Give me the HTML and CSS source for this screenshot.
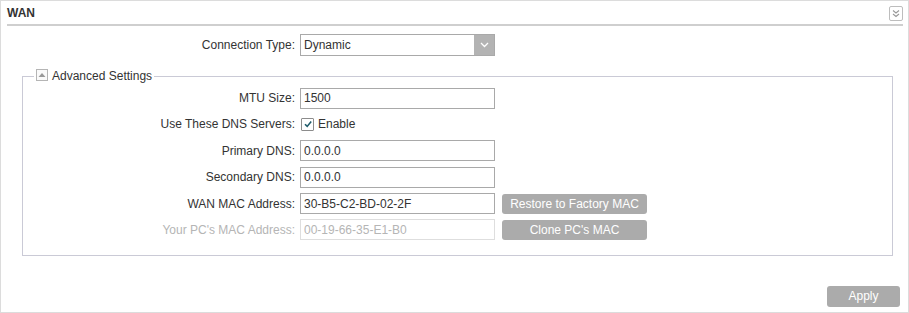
FILE: index.html
```html
<!DOCTYPE html>
<html>
<head>
<meta charset="utf-8">
<link rel="stylesheet" href="styles.css">
</head>
<body>
<div class="panel">
  <div class="header">
    <span class="title">WAN</span>
    <span class="collapse">
      <svg width="8" height="9" viewBox="0 0 8 9"><path d="M1 1.5 L4 4 L7 1.5 M1 5 L4 7.5 L7 5" fill="none" stroke="#999" stroke-width="1.1"/></svg>
    </span>
  </div>

  <div class="row top-row">
    <label class="lbl">Connection Type:</label>
    <div class="select">
      <span class="sel-text">Dynamic</span>
      <span class="sel-arrow"><svg width="9" height="6" viewBox="0 0 9 6"><path d="M1 1 L4.5 4.5 L8 1" fill="none" stroke="#fff" stroke-width="1.3"/></svg></span>
    </div>
  </div>

  <fieldset class="adv">
    <legend><span class="up-icon"><svg width="8" height="6" viewBox="0 0 8 6"><path d="M0.5 5 L4 1 L7.5 5 Z" fill="#999"/></svg></span>Advanced Settings</legend>
    <div class="grid">
      <label class="lbl">MTU Size:</label>
      <div class="field"><input class="txt" value="1500"></div>

      <label class="lbl">Use These DNS Servers:</label>
      <div class="field"><span class="check"><svg width="10" height="10" viewBox="0 0 10 10"><path d="M2 5.2 L4.2 7.4 L8.2 2.6" fill="none" stroke="#1f5c6b" stroke-width="1.6"/></svg></span><span class="chk-lbl">Enable</span></div>

      <label class="lbl">Primary DNS:</label>
      <div class="field"><input class="txt" value="0.0.0.0"></div>

      <label class="lbl">Secondary DNS:</label>
      <div class="field"><input class="txt" value="0.0.0.0"></div>

      <label class="lbl">WAN MAC Address:</label>
      <div class="field"><input class="txt" value="30-B5-C2-BD-02-2F"><button class="btn">Restore to Factory MAC</button></div>

      <label class="lbl disabled">Your PC's MAC Address:</label>
      <div class="field"><input class="txt dis" value="00-19-66-35-E1-B0" disabled><button class="btn">Clone PC's MAC</button></div>
    </div>
  </fieldset>

  <div class="footer">
    <button class="btn apply">Apply</button>
  </div>
</div>
</body>
</html>
```

FILE: styles.css
```css
html, body {
  margin: 0;
  padding: 0;
  background: #fff;
}
body {
  font-family: "Liberation Sans", Arial, sans-serif;
  font-size: 12px;
  color: #333;
}
.panel {
  width: 909px;
  height: 313px;
  box-sizing: border-box;
  border: 1px solid #dcdcdc;
  display: flex;
  flex-direction: column;
}
.header {
  height: 23px;
  margin: 0 5px 0 6px;
  border-bottom: 2px solid #cfcfcf;
  display: flex;
  align-items: center;
  justify-content: space-between;
}
.title {
  font-weight: bold;
  font-size: 12px;
  color: #333;
}
.collapse {
  width: 12px;
  height: 13px;
  border: 1px solid #bdbdbd;
  border-radius: 2px;
  display: flex;
  align-items: center;
  justify-content: center;
  margin-top: 2px;
}
.row {
  display: grid;
  grid-template-columns: 294px 195px;
  column-gap: 5px;
  align-items: center;
}
.top-row {
  margin-top: 8px;
  height: 22px;
}
.lbl {
  text-align: right;
  color: #333;
  white-space: nowrap;
}
.lbl.disabled {
  color: #b5b5b5;
}
.select {
  height: 22px;
  box-sizing: border-box;
  border: 1px solid #a9a9a9;
  display: flex;
  align-items: center;
  justify-content: space-between;
}
.sel-text {
  padding-left: 3px;
}
.sel-arrow {
  width: 20px;
  height: 20px;
  background: #b3b3b3;
  display: flex;
  align-items: center;
  justify-content: center;
}
.adv {
  margin: 12px 15px 0 21px;
  padding: 3px 0 14px 0;
  border: 1px solid #cacad6;
  min-width: 0;
}
.adv legend {
  margin-left: 11px;
  padding: 0 2px;
  line-height: 16px;
  display: flex;
  align-items: center;
  color: #333;
}
.up-icon {
  width: 10px;
  height: 10px;
  border: 1px solid #b5b5b5;
  background: #fafafa;
  display: inline-flex;
  align-items: center;
  justify-content: center;
  margin-right: 4px;
  margin-top: -2px;
}
.grid {
  display: grid;
  grid-template-columns: 272px 1fr;
  column-gap: 5px;
  grid-auto-rows: 22px;
  row-gap: 4.4px;
  align-items: center;
}
.field {
  display: flex;
  align-items: center;
  height: 22px;
}
.txt {
  width: 195px;
  height: 21px;
  box-sizing: border-box;
  border: 1px solid #a9a9a9;
  padding: 0 3px;
  margin: 0;
  font-family: "Liberation Sans", Arial, sans-serif;
  font-size: 12px;
  color: #333;
  background: #fff;
  outline: none;
}
.txt.dis {
  border-color: #dedede;
  color: #b5b5b5;
}
.check {
  width: 11px;
  height: 11px;
  border: 1px solid #8c8c8c;
  border-radius: 1px;
  display: inline-flex;
  align-items: center;
  justify-content: center;
  margin-left: 1px;
}
.chk-lbl {
  margin-left: 4px;
}
.btn {
  font-family: "Liberation Sans", Arial, sans-serif;
  font-size: 12px;
  color: #fff;
  background: #ababab;
  border: none;
  border-radius: 3px;
  height: 20px;
  padding: 0;
  margin: 0;
}
.field .btn {
  width: 145px;
  margin-left: 7px;
}
.footer {
  display: flex;
  justify-content: flex-end;
  margin-top: 30px;
  padding-right: 8px;
}
.apply {
  width: 73px;
  height: 21px;
}
```
